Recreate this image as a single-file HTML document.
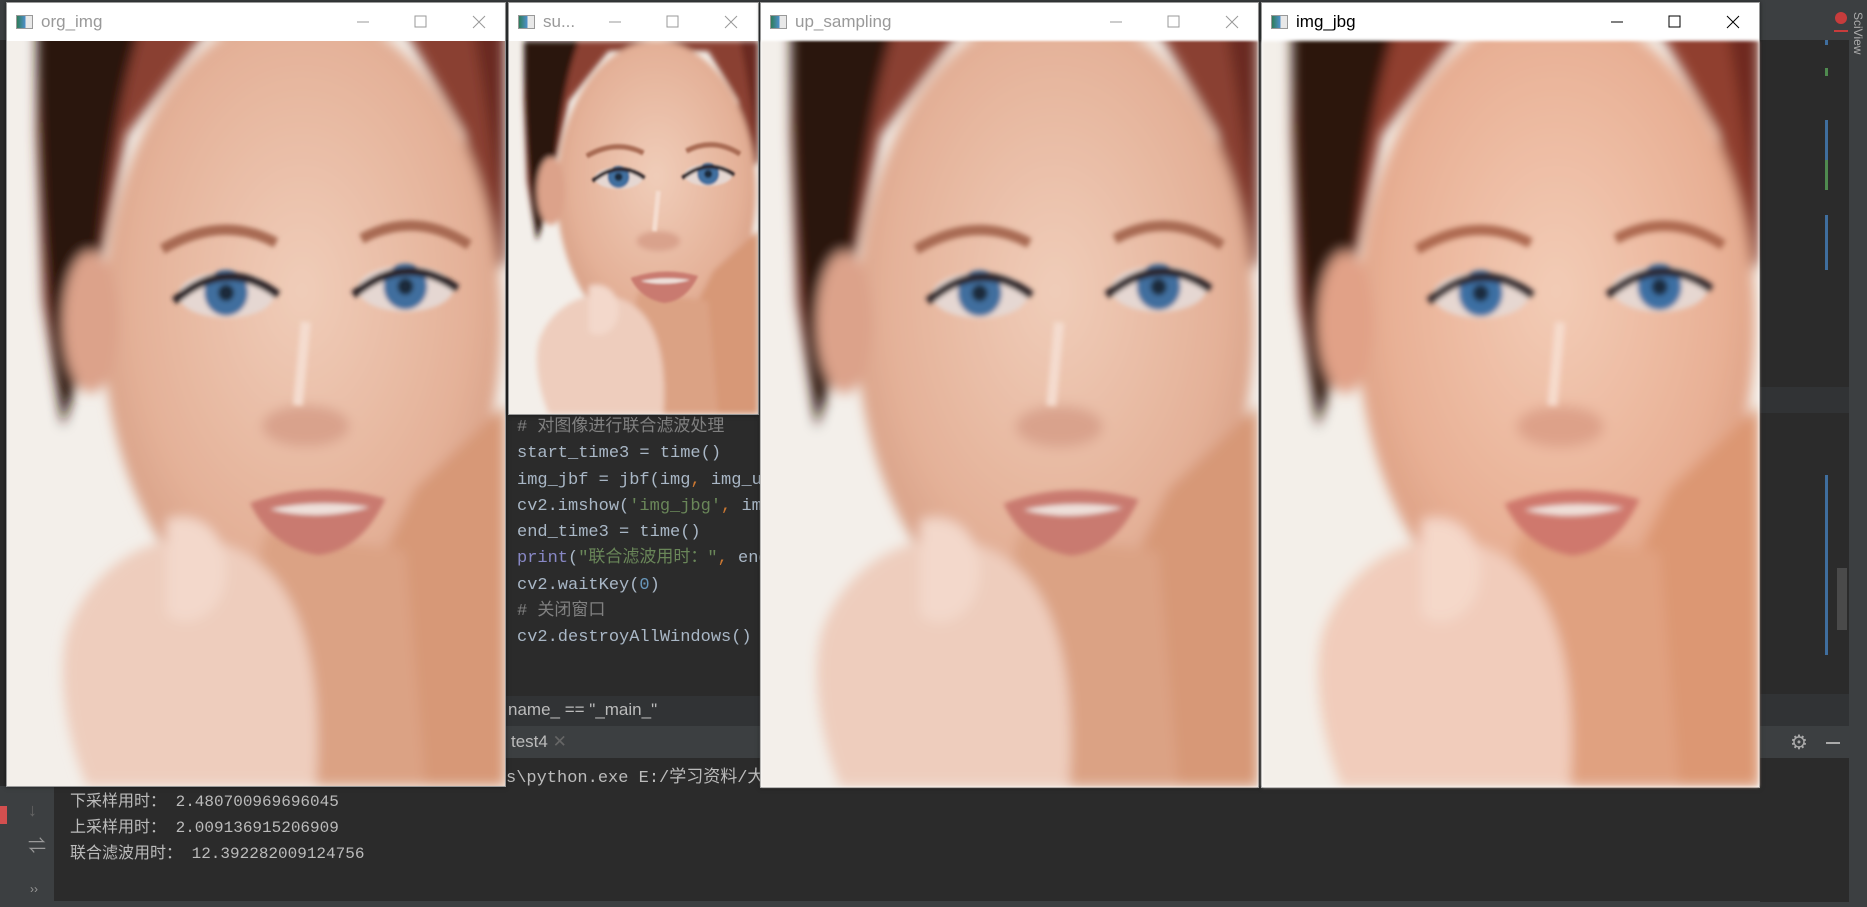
<!DOCTYPE html>
<html><head><meta charset="utf-8"><style>
*{margin:0;padding:0;box-sizing:border-box}
body{width:1867px;height:907px;overflow:hidden;background:#2b2b2b;position:relative;font-family:"Liberation Sans","Noto Sans CJK SC",sans-serif}
.abs{position:absolute}
.win{position:absolute;background:#fff;border:1px solid #9a9a9a;box-shadow:0 0 4px rgba(0,0,0,.5)}
.tb{height:38px;position:relative;background:#fff}
.tb .ic{position:absolute;left:9px;top:12px;width:17px;height:14px;border:1px solid #999;background:linear-gradient(90deg,#2f7d5a 0,#4e8fc9 55%,#e8e8e8 56%)}
.tb .t{position:absolute;left:34px;top:9px;font-size:17px;color:#999}
.tb .c{position:absolute;top:0;width:58px;height:38px}
.img{position:absolute;left:0;top:38px;right:0;bottom:0;overflow:hidden}
.img svg{width:100%;height:100%;display:block}
.code{font-family:"Liberation Mono","Noto Sans CJK SC",monospace;font-size:17px;color:#a9b7c6;position:absolute;white-space:pre}
.cm{color:#808080}.st{color:#6a8759}.kw{color:#8888c6}.nm{color:#6897bb}.pu{color:#cc7832}
</style></head><body>
<div class="abs" style="left:0;top:0;width:1867px;height:40px;background:#3c3f41"></div>
<div class="abs" style="left:506px;top:414px;width:254px;height:282px;background:#2b2b2b"></div>
<div class="code" style="left:517px;top:415px;line-height:26.3px"><span class="cm"># 对图像进行联合滤波处理</span>
start_time3 = time()
img_jbf = jbf(img<span class="pu">,</span> img_up
cv2.imshow(<span class="st">'img_jbg'</span><span class="pu">,</span> img
end_time3 = time()
<span class="kw">print</span>(<span class="st">"联合滤波用时："</span><span class="pu">,</span> end
cv2.waitKey(<span class="nm">0</span>)
<span class="cm"># 关闭窗口</span>
cv2.destroyAllWindows()</div>
<div class="abs" style="left:506px;top:696px;width:254px;height:30px;background:#313335;color:#bbb;font-size:17px;padding:4px 0 0 2px;white-space:pre">name_ == "_main_"</div>
<div class="abs" style="left:506px;top:726px;width:254px;height:32px;background:#3c3f41;color:#bbb;font-size:17px;padding:6px 0 0 5px">test4 <span style="color:#666">✕</span></div>
<div class="code" style="left:506px;top:762px;color:#bbb">s\python.exe E:/学习资料/大三</div>
<div class="abs" style="left:0;top:786px;width:54px;height:121px;background:#3c3f41"></div>
<div class="abs" style="left:0;top:806px;width:7px;height:18px;background:#d34f4f"></div>
<div class="abs" style="left:28px;top:800px;color:#666;font-size:18px">↓</div>
<div class="abs" style="left:28px;top:832px;color:#999;font-size:18px">⇌</div>
<div class="abs" style="left:30px;top:882px;color:#999;font-size:12px">››</div>
<div class="code" style="left:70px;top:789px;line-height:26px;color:#bbb;font-size:16px">下采样用时： 2.480700969696045
上采样用时： 2.009136915206909
联合滤波用时： 12.392282009124756</div>
<div class="abs" style="left:0;top:901px;width:1867px;height:6px;background:#3c3f41"></div>
<div class="abs" style="left:1760px;top:40px;width:89px;height:862px;background:#2b2b2b"></div>
<div class="abs" style="left:1760px;top:387px;width:89px;height:26px;background:#313335"></div>
<div class="abs" style="left:1760px;top:694px;width:89px;height:32px;background:#313335"></div>
<div class="abs" style="left:1760px;top:726px;width:89px;height:32px;background:#3c3f41"></div>
<div class="abs" style="left:1790px;top:730px;color:#aaa;font-size:20px">⚙</div>
<div class="abs" style="left:1826px;top:742px;width:14px;height:2px;background:#aaa"></div>
<div class="abs" style="left:1849px;top:0;width:18px;height:902px;background:#3c3f41"></div>
<div class="abs" style="left:1835px;top:12px;width:12px;height:12px;border-radius:50%;background:#c73c3c"></div>
<div class="abs" style="left:1834px;top:30px;width:14px;height:2px;background:#c73c3c"></div>
<div class="abs" style="left:1837px;top:568px;width:10px;height:62px;background:#4a4a4a"></div>
<div class="abs" style="left:1851px;top:12px;color:#aaa;font-size:12px;writing-mode:vertical-rl">SciView</div>
<div class="abs" style="left:1825px;top:40px;width:3px;height:5px;background:#3f6e9e"></div>
<div class="abs" style="left:1825px;top:68px;width:3px;height:8px;background:#4f8a4f"></div>
<div class="abs" style="left:1825px;top:120px;width:3px;height:40px;background:#3f6e9e"></div>
<div class="abs" style="left:1825px;top:160px;width:3px;height:30px;background:#4f8a4f"></div>
<div class="abs" style="left:1825px;top:215px;width:3px;height:55px;background:#3f6e9e"></div>
<div class="abs" style="left:1825px;top:475px;width:3px;height:180px;background:#3f6e9e"></div>

<svg width="0" height="0" style="position:absolute">
<defs>
<filter id="bl"><feGaussianBlur stdDeviation="3"/></filter>
<filter id="bl2"><feGaussianBlur stdDeviation="1.2"/></filter>
<radialGradient id="sk" cx="0.5" cy="0.45" r="0.6"><stop offset="0" stop-color="#f0cdb9"/><stop offset="0.7" stop-color="#e4b198"/><stop offset="1" stop-color="#d49a80"/></radialGradient>
<symbol id="face" viewBox="0 0 250 373" preserveAspectRatio="none">
<rect width="250" height="373" fill="#f3efea"/>
<g filter="url(#bl)">
<path d="M15 0H250V120L238 140 230 60 200 10 100 10 60 60 45 130 28 200 18 140 15 60Z" fill="#8a3f32"/>
<path d="M15 0H70C55 40 50 90 45 130 42 160 35 180 28 200 18 140 15 60 15 0Z" fill="#2a120e"/>
<path d="M232 0H250V120C245 80 240 40 232 0Z" fill="#6a2a20"/>
<ellipse cx="148" cy="150" rx="100" ry="150" fill="url(#sk)"/>
<path d="M250 190L250 373H140L170 300 205 230Z" fill="#d79877"/>
<path d="M110 330L130 250 200 260 210 373H110Z" fill="#dba284"/>
<ellipse cx="42" cy="150" rx="14" ry="34" fill="#dca28a"/>
<path d="M30 300C40 270 70 250 100 255 140 260 160 300 155 373H40C30 350 25 320 30 300Z" fill="#eecdbd"/>
<path d="M80 245C95 240 110 250 110 270 110 290 90 300 80 290Z" fill="#f3d8cb"/>
<ellipse cx="150" cy="200" rx="22" ry="10" fill="#d9a28c"/>
</g>
<g filter="url(#bl2)">
<path d="M78 115Q108 98 135 112" stroke="#a86a52" stroke-width="5" fill="none"/>
<path d="M178 110Q205 96 232 113" stroke="#a86a52" stroke-width="5" fill="none"/>
<ellipse cx="110" cy="137" rx="24" ry="11" fill="#e5d7d2"/>
<ellipse cx="200" cy="134" rx="24" ry="11" fill="#e5d7d2"/>
<circle cx="110" cy="136" r="11" fill="#3f6e9e"/>
<circle cx="200" cy="133" r="11" fill="#3f6e9e"/>
<circle cx="110" cy="136" r="4" fill="#1f2a3a"/>
<circle cx="200" cy="133" r="4" fill="#1f2a3a"/>
<path d="M84 140Q110 118 136 137" stroke="#2b2426" stroke-width="4" fill="none"/>
<path d="M174 137Q200 116 226 134" stroke="#2b2426" stroke-width="4" fill="none"/>
<path d="M150 150L146 190" stroke="#f4dccf" stroke-width="5" fill="none"/>
<path d="M122 237Q155 225 190 235 178 260 156 262 132 258 122 237Z" fill="#c97a70"/>
<path d="M132 240Q156 235 182 239 156 246 132 240Z" fill="#eee0da"/>
</g>
</symbol>
</defs></svg>

<div class="win" style="left:6px;top:2px;width:500px;height:785px">
<div class="tb"><div class="ic"></div><div class="t">org_img</div>
<svg class="c" style="left:326px" viewBox="0 0 58 38"><path d="M24 19h12" stroke="#999" stroke-width="1"/></svg>
<svg class="c" style="left:384px" viewBox="0 0 58 38"><rect x="24" y="13" width="11" height="11" fill="none" stroke="#999"/></svg>
<svg class="c" style="left:442px" viewBox="0 0 58 38"><path d="M24 13l12 12M36 13l-12 12" stroke="#999"/></svg></div>
<div class="img"><svg viewBox="0 15 250 358" preserveAspectRatio="none"><use href="#face" width="250" height="373"/></svg></div></div>

<div class="win" style="left:508px;top:2px;width:251px;height:413px">
<div class="tb"><div class="ic"></div><div class="t">su...</div>
<svg class="c" style="left:76px" viewBox="0 0 58 38"><path d="M24 19h12" stroke="#999"/></svg>
<svg class="c" style="left:134px" viewBox="0 0 58 38"><rect x="24" y="13" width="11" height="11" fill="none" stroke="#999"/></svg>
<svg class="c" style="left:192px" viewBox="0 0 58 38"><path d="M24 13l12 12M36 13l-12 12" stroke="#999"/></svg></div>
<div class="img"><svg viewBox="0 0 250 373" preserveAspectRatio="none"><use href="#face" width="250" height="373"/></svg></div></div>

<div class="win" style="left:760px;top:2px;width:499px;height:786px">
<div class="tb"><div class="ic"></div><div class="t">up_sampling</div>
<svg class="c" style="left:325px" viewBox="0 0 58 38"><path d="M24 19h12" stroke="#999"/></svg>
<svg class="c" style="left:383px" viewBox="0 0 58 38"><rect x="24" y="13" width="11" height="11" fill="none" stroke="#999"/></svg>
<svg class="c" style="left:441px" viewBox="0 0 58 38"><path d="M24 13l12 12M36 13l-12 12" stroke="#999"/></svg></div>
<div class="img" style="filter:blur(1px)"><svg viewBox="0 15 250 358" preserveAspectRatio="none"><use href="#face" width="250" height="373"/></svg></div></div>

<div class="win" style="left:1261px;top:2px;width:499px;height:786px">
<div class="tb"><div class="ic"></div><div class="t" style="color:#000">img_jbg</div>
<svg class="c" style="left:325px" viewBox="0 0 58 38"><path d="M24 19h12" stroke="#000"/></svg>
<svg class="c" style="left:383px" viewBox="0 0 58 38"><rect x="24" y="13" width="11" height="11" fill="none" stroke="#000"/></svg>
<svg class="c" style="left:441px" viewBox="0 0 58 38"><path d="M24 13l12 12M36 13l-12 12" stroke="#000"/></svg></div>
<div class="img" style="filter:blur(1.5px) saturate(1.1)"><svg viewBox="0 15 250 358" preserveAspectRatio="none"><use href="#face" width="250" height="373"/></svg></div></div>
</body></html>
